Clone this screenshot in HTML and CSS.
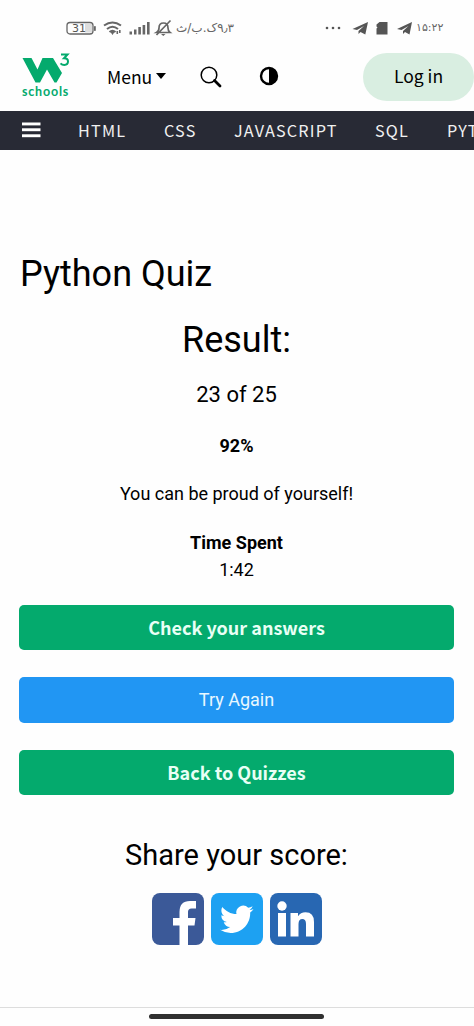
FILE: index.html
```html
<!DOCTYPE html>
<html lang="en">
<head>
<meta charset="utf-8">
<title>Python Quiz</title>
<link rel="stylesheet" href="styles.css">
</head>
<body>
<div class="status">
  <svg class="status-left" width="110" height="24" viewBox="0 0 110 24">
    <g fill="none" stroke="#666">
      <rect x="1" y="6.500" width="26" height="11.500" rx="3" stroke-width="1.300"/>
      <path d="M38 9.500Q46.500 3.500 55 9.500M41 13Q46.500 8.500 52 13M43.500 16Q46.500 13.500 49.500 16" stroke-width="2"/>
      <path d="M90.500 16.500Q93 15 93 12Q93 7 97.500 7T102 12Q102 15 104 16.500ZM104.500 4.500L90.500 19" stroke-width="1.700"/>
    </g>
    <g fill="#666">
      <rect x="19" y="8" width="7" height="8.500" fill="#ddd"/>
      <rect x="28" y="10" width="1.800" height="5" rx=".8"/>
      <path d="M44.500 16L46.500 14.500L48.500 16L46.500 19ZM50.500 15h1.600v3h-1.600zM53 14h1.600v3h-1.600z"/>
      <rect x="63.500" y="15.500" width="2.500" height="3"/><rect x="68" y="13.500" width="2.500" height="5"/><rect x="72.300" y="11" width="2.600" height="7.500"/><rect x="76.600" y="9" width="2.600" height="9.500"/><rect x="81" y="6" width="2.600" height="12.500"/>
      <path d="M95 18h4.500l-2.200 2z"/>
    </g>
    <text class="battery" x="13" y="16">31</text>
  </svg>
  <span class="speed" dir="rtl">۹٫۳ک.ب/ث</span>
  <svg class="status-right" width="92" height="24" viewBox="0 0 92 24" fill="#555">
    <circle cx="3" cy="12" r="1.300"/><circle cx="9" cy="12" r="1.300"/><circle cx="15" cy="12" r="1.300"/>
    <path d="M28.500 13L44 6L41.300 18.500L36.500 16L34.500 18V15L40 10L33 14Z"/>
    <path d="M55.500 6H63.500V18.500H52.500V12.500L53.500 11.500L52.500 10.500V8.500Z"/>
    <path d="M73 13L88 6L85.500 18.500L81 16L79 18V15L84.500 10L77.500 14Z"/>
  </svg>
  <span class="clock">۱۵:۲۲</span>
</div>
<header class="top">
  <a class="logo">
    <svg width="50" height="31" viewBox="0 0 50 31">
      <path d="M.5 5H9.500L15.500 16.500L20.500 5H31L40 20L34.500 29.500H32.500L25 16.500L18 29.500H13.500Z" fill="#04aa6d"/>
      <path d="M39 1.500H45.500L42 5.200Q46 5.200 46 8.400T42.300 12Q40 12 38.500 10.300" fill="none" stroke="#04aa6d" stroke-width="2"/>
    </svg>
    <span class="logo-name">schools</span>
  </a>
  <a class="menu">Menu<i class="caret"></i></a>
  <svg class="search" width="22" height="22" viewBox="0 0 22 22" fill="none" stroke="#000"><circle cx="9" cy="9" r="7.800" stroke-width="1.500"/><path d="M14.500 14.500L20 20" stroke-width="2.800" stroke-linecap="round"/></svg>
  <svg class="contrast" width="20" height="20" viewBox="0 0 20 20"><circle cx="10" cy="10" r="8" fill="none" stroke="#000" stroke-width="2.400"/><path d="M10 2a8 8 0 0 1 0 16z"/></svg>
  <a class="login">Log in</a>
</header>
<nav class="topics">
  <svg class="bars" width="19" height="16" viewBox="0 0 19 16" fill="#fff"><rect width="18.500" height="2.900" y=".5"/><rect width="18.500" height="2.900" y="6.300"/><rect width="18.500" height="2.900" y="12.300"/></svg>
  <a class="t-html">HTML</a><a class="t-css">CSS</a><a class="t-js">JAVASCRIPT</a><a class="t-sql">SQL</a><a>PYTHON</a>
</nav>
<main class="quiz">
  <h1>Python Quiz</h1>
  <h2>Result:</h2>
  <p class="score">23 of 25</p>
  <p class="percent">92%</p>
  <p class="praise">You can be proud of yourself!</p>
  <p class="time"><b>Time Spent</b><br>1:42</p>
  <div class="actions">
    <a class="btn">Check your answers</a>
    <a class="btn again">Try Again</a>
    <a class="btn">Back to Quizzes</a>
  </div>
  <h3>Share your score:</h3>
  <div class="share">
    <svg width="52" height="52" viewBox="0 0 52 52"><rect width="52" height="52" rx="8" fill="#3b5998"/><path fill="#fff" d="M27.500 52V32.500H21V25H27.500V19Q27.500 8 38 8H44V15.500H39.500Q36 15.500 36 19V25H43.500L42.500 32.500H36V52Z"/></svg>
    <svg width="52" height="52" viewBox="0 0 52 52"><rect width="52" height="52" rx="8" fill="#1da1f2"/><path fill="#fff" transform="translate(9 9.500) scale(1.400)" d="M23.950 4.570a10 10 0 0 1-2.820.770 4.960 4.960 0 0 0 2.160-2.720c-.950.550-2 .950-3.130 1.180a4.920 4.920 0 0 0-8.380 4.480C7.690 8.100 4.070 6.130 1.640 3.160a4.820 4.820 0 0 0-.670 2.480c0 1.700.870 3.210 2.190 4.100a4.900 4.900 0 0 1-2.230-.620v.060a4.920 4.920 0 0 0 3.950 4.830 5 5 0 0 1-2.210.080 4.940 4.940 0 0 0 4.600 3.420A9.870 9.870 0 0 1 0 19.540a13.990 13.990 0 0 0 7.560 2.210c9.050 0 14-7.500 14-13.980l-.010-.640a9.900 9.900 0 0 0 2.400-2.560z"/></svg>
    <svg width="52" height="52" viewBox="0 0 52 52"><rect width="52" height="52" rx="8" fill="#2867b2"/><g fill="#fff"><circle cx="12" cy="13" r="4.700"/><path d="M8 20H16V43.500H8ZM20.500 20H28V23.300Q30.500 19.300 35.500 19.300Q44 19.300 44 29V43.500H36V31Q36 26 32.300 26T28.500 31V43.500H20.500Z"/></g></svg>
  </div>
</main>
<footer class="system"><div class="handle"></div></footer>
</body>
</html>
```
FILE: styles.css
```css
* { box-sizing: border-box; }
body { margin: 0; width: 474px; height: 1026px; overflow: hidden; display: flex; flex-direction: column; background: #fefefe; color: #000; font-family: Roboto, sans-serif; font-size: 18px; }
h1, h2, h3, p { margin: 0; font-weight: 400; }
svg { display: block; flex: none; }

.status { display: flex; align-items: flex-start; height: 44px; padding: 16px 0 0 66px; color: #666; font-family: "DejaVu Sans", sans-serif; font-size: 12px; line-height: 24px; white-space: nowrap; }
.battery { font: 11px "DejaVu Sans", sans-serif; text-anchor: middle; fill: #555; }
.speed { width: 60px; margin-right: 88px; text-align: left; }
.clock { font-size: 11px; }

.top { display: flex; align-items: center; height: 67px; font-family: "Noto Sans CJK SC", sans-serif; }
.logo { display: flex; flex: none; flex-direction: column; width: 51px; height: 50px; margin-left: 22px; color: #04aa6d; }
.logo-name { margin-top: 1px; font: 700 12.500px/14px Lato, sans-serif; letter-spacing: .8px; }
.menu { display: flex; flex: none; align-items: center; width: 93px; margin-left: 34px; padding-bottom: 3px; font-size: 17.500px; line-height: 27px; }
.caret { margin-left: 4px; border: 5.500px solid transparent; border-top: 6px solid #000; border-bottom: 0; }
.search { margin-bottom: 2px; }
.contrast { margin: 0 0 3px 37px; }
.login { flex: none; width: 111px; height: 48px; margin: 0 0 1px 84px; border-radius: 24px; background: #d9eee1; font-size: 17.500px; line-height: 46px; text-align: center; }

.topics { display: flex; align-items: center; height: 39px; padding-left: 22px; overflow: hidden; background: #282a35; color: #f1f1f1; font-family: "Noto Sans CJK SC", sans-serif; font-size: 16.200px; letter-spacing: 1.200px; white-space: nowrap; }
.topics a { flex: none; padding-bottom: 2px; }
.bars { margin: 0 37px 1px 0; }
.t-html { width: 86px; }
.t-css { width: 70px; }
.t-js { width: 141px; }
.t-sql { width: 72px; }

.quiz { flex: 1; padding: 102px 20px 0 19px; text-align: center; }
h1 { padding-left: 1px; text-align: left; font-size: 36px; line-height: 44px; }
h2 { margin-top: 22px; font-size: 36px; line-height: 44px; }
.score { margin-top: 19px; font-size: 22px; line-height: 28px; }
.percent { margin-top: 23px; font-weight: 700; line-height: 27px; }
.praise { margin-top: 21px; line-height: 27px; }
.time { margin-top: 22px; line-height: 27px; }
.actions { display: grid; gap: 27px; margin-top: 22px; }
.btn { height: 45px; border-radius: 5px; background: #04aa6d; color: #e8fff5; font: 700 18px/45px "Noto Sans CJK SC", sans-serif; }
.again { height: 46px; background: #2196f3; color: #e8f8ff; font: 400 18px/45px Roboto, sans-serif; }
h3 { margin-top: 42px; font-size: 29px; line-height: 36px; }
.share { display: flex; justify-content: center; gap: 7px; margin-top: 20px; }

.system { height: 19px; border-top: 1px solid #ddd; padding-top: 6px; }
.handle { width: 175px; height: 5px; margin-left: 149px; border-radius: 3px; background: #303030; }
```
